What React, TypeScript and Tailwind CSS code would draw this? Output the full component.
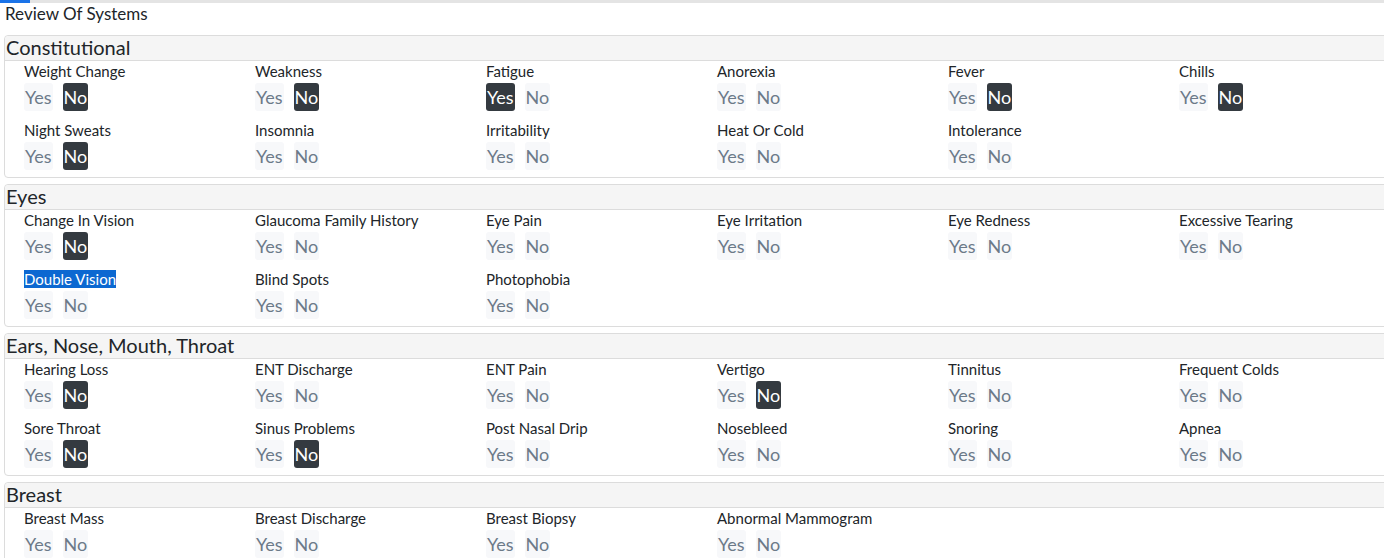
import React from "react";

type Item = { label: string; value?: "Yes" | "No"; highlight?: boolean };
type Section = { title: string; items: Item[] };

const sections: Section[] = [
  {
    title: "Constitutional",
    items: [
      { label: "Weight Change", value: "No" },
      { label: "Weakness", value: "No" },
      { label: "Fatigue", value: "Yes" },
      { label: "Anorexia" },
      { label: "Fever", value: "No" },
      { label: "Chills", value: "No" },
      { label: "Night Sweats", value: "No" },
      { label: "Insomnia" },
      { label: "Irritability" },
      { label: "Heat Or Cold" },
      { label: "Intolerance" },
    ],
  },
  {
    title: "Eyes",
    items: [
      { label: "Change In Vision", value: "No" },
      { label: "Glaucoma Family History" },
      { label: "Eye Pain" },
      { label: "Eye Irritation" },
      { label: "Eye Redness" },
      { label: "Excessive Tearing" },
      { label: "Double Vision", highlight: true },
      { label: "Blind Spots" },
      { label: "Photophobia" },
    ],
  },
  {
    title: "Ears, Nose, Mouth, Throat",
    items: [
      { label: "Hearing Loss", value: "No" },
      { label: "ENT Discharge" },
      { label: "ENT Pain" },
      { label: "Vertigo", value: "No" },
      { label: "Tinnitus" },
      { label: "Frequent Colds" },
      { label: "Sore Throat", value: "No" },
      { label: "Sinus Problems", value: "No" },
      { label: "Post Nasal Drip" },
      { label: "Nosebleed" },
      { label: "Snoring" },
      { label: "Apnea" },
    ],
  },
  {
    title: "Breast",
    items: [
      { label: "Breast Mass" },
      { label: "Breast Discharge" },
      { label: "Breast Biopsy" },
      { label: "Abnormal Mammogram" },
    ],
  },
];

function Btn({ text, active }: { text: string; active: boolean }) {
  return (
    <span
      className={
        active
          ? "h-[28px] px-[1px] rounded-[3px] bg-[#343a40] text-white text-[18px] leading-[28px] flex items-center justify-center"
          : "h-[28px] px-[1px] rounded-[3px] bg-[#f7f8fa] text-[#6c7a89] text-[18px] leading-[28px] flex items-center justify-center"
      }
    >
      {text}
    </span>
  );
}

function Field({ item }: { item: Item }) {
  return (
    <div className="flex flex-col">
      <div className="h-[20px] text-[15px] leading-[20px] text-[#212529]">
        <span className={item.highlight ? "bg-[#0c68d1] text-white" : ""}>{item.label}</span>
      </div>
      <div className="mt-[2px] flex gap-[10px]">
        <Btn text="Yes" active={item.value === "Yes"} />
        <Btn text="No" active={item.value === "No"} />
      </div>
    </div>
  );
}

export default function App() {
  return (
    <div
      className="w-[1384px] h-[558px] overflow-hidden bg-white"
      style={{ fontFamily: "Lato, 'Noto Sans', sans-serif" }}
    >
      <div className="h-[3px] bg-[#e4e4e4] flex">
        <div className="w-[30px] h-full bg-[#1a73e8]" />
      </div>
      <div className="pl-[5px] text-[17px] leading-[22px] text-[#212529]">Review Of Systems</div>
      <div className="pl-[4px] pt-[10px] flex flex-col gap-[6px]">
        {sections.map((s) => (
          <div key={s.title} className="w-[1420px] border border-[#dcdcdc] rounded-[4px]">
            <div className="h-[25px] bg-[#f5f5f5] border-b border-[#dcdcdc] rounded-t-[4px] pl-[1px] text-[20px] leading-[22px] text-[#212529]">
              {s.title}
            </div>
            <div className="pl-[19px] pt-0 pb-[7px] grid grid-cols-[repeat(6,231px)] gap-y-[9px]">
              {s.items.map((it) => (
                <Field key={it.label} item={it} />
              ))}
            </div>
          </div>
        ))}
      </div>
    </div>
  );
}
